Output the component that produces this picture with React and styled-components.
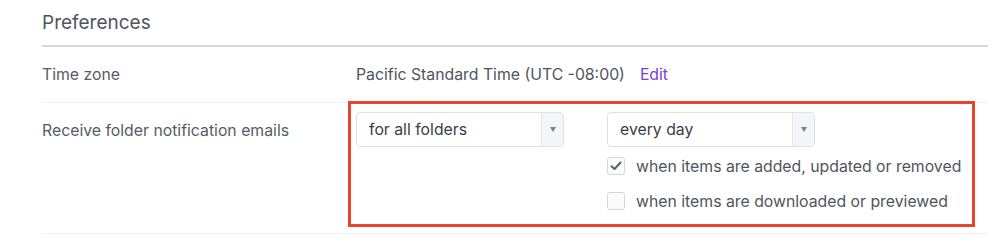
import React from "react";
import styled, { createGlobalStyle } from "styled-components";

const Global = createGlobalStyle`
  html, body { margin: 0; padding: 0; background: #fff; }
  body { font-family: Inter, "Noto Sans", sans-serif; color: #555b64; -webkit-font-smoothing: antialiased; }
`;

const Page = styled.div`
  width: 946px;
  margin-left: 42px;
`;

const Title = styled.h2`
  margin: 0;
  height: 47px;
  display: flex;
  align-items: center;
  padding-bottom: 1px;
  box-sizing: border-box;
  font-size: 19px;
  font-weight: 400;
  color: #4f555e;
  border-bottom: 2px solid #d6d7da;
`;

const Row = styled.div`
  display: flex;
  align-items: ${(p) => (p.$top ? "flex-start" : "center")};
  min-height: ${(p) => p.$h || 55}px;
  border-bottom: 1px solid #eef0f4;
  font-size: 15.8px;
  box-sizing: border-box;
`;

const Label = styled.div`
  width: ${(p) => p.$w || 314}px;
  flex: none;
  color: #565c65;
  ${(p) => p.$pt && `padding-top: ${p.$pt}px;`}
`;

const Value = styled.div`
  color: #4f555e;
  display: flex;
  align-items: center;
  gap: 15px;
  padding-bottom: 1px;
`;

const Link = styled.a`
  color: #7a3fd6;
  text-decoration: none;
  cursor: pointer;
`;

const Highlight = styled.div`
  margin-top: -2px;
  margin-bottom: 6px;
  width: 627px;
  box-sizing: border-box;
  border: 3px solid #e8432d;
  padding: 8px 0 14px 5px;
  display: flex;
  gap: 43px;
`;

const Column = styled.div`
  display: flex;
  flex-direction: column;
`;

const Select = styled.div`
  width: 208px;
  height: 35px;
  box-sizing: border-box;
  border: 1px solid #dfe1e6;
  border-radius: 4px;
  display: flex;
  overflow: hidden;
  background: #fff;
`;

const SelectText = styled.div`
  flex: 1;
  display: flex;
  align-items: center;
  padding-left: 12px;
  color: #393e45;
  font-size: 15.8px;
`;

const Arrow = styled.div`
  width: 21px;
  border-left: 1px solid #e3e5ea;
  background: #f4f5f8;
  display: flex;
  align-items: center;
  justify-content: center;
  &::after {
    content: "";
    border-left: 3.5px solid transparent;
    border-right: 3.5px solid transparent;
    border-top: 5px solid #7c8088;
  }
`;

const CheckRow = styled.label`
  display: flex;
  align-items: center;
  gap: 11px;
  height: 18px;
  margin-top: ${(p) => p.$mt}px;
  color: #4f555e;
  font-size: 15.8px;
`;

const Box = styled.span`
  width: 18px;
  height: 18px;
  box-sizing: border-box;
  border: 1px solid #d3d6dc;
  border-radius: 3px;
  background: #fbfbfc;
  display: flex;
  align-items: center;
  justify-content: center;
  flex: none;
`;

function Dropdown({ value }) {
  return (
    <Select>
      <SelectText>{value}</SelectText>
      <Arrow />
    </Select>
  );
}

function Check({ checked, children, mt }) {
  return (
    <CheckRow $mt={mt}>
      <Box>
        {checked && (
          <svg width="12" height="10" viewBox="0 0 12 10">
            <path d="M1.5 5.2 L4.5 8 L10.5 1.5" fill="none" stroke="#5b6068" strokeWidth="2" strokeLinecap="round" strokeLinejoin="round" />
          </svg>
        )}
      </Box>
      {children}
    </CheckRow>
  );
}

export default function App() {
  return (
    <>
      <Global />
      <Page>
        <Title>Preferences</Title>
        <Row $h={56}>
          <Label>Time zone</Label>
          <Value>
            Pacific Standard Time (UTC -08:00)
            <Link>Edit</Link>
          </Value>
        </Row>
        <Row $top>
          <Label $w={306} $pt={18}>Receive folder notification emails</Label>
          <Highlight>
            <Dropdown value="for all folders" />
            <Column>
              <Dropdown value="every day" />
              <Check checked mt={10}>when items are added, updated or removed</Check>
              <Check mt={17}>when items are downloaded or previewed</Check>
            </Column>
          </Highlight>
        </Row>
      </Page>
    </>
  );
}
